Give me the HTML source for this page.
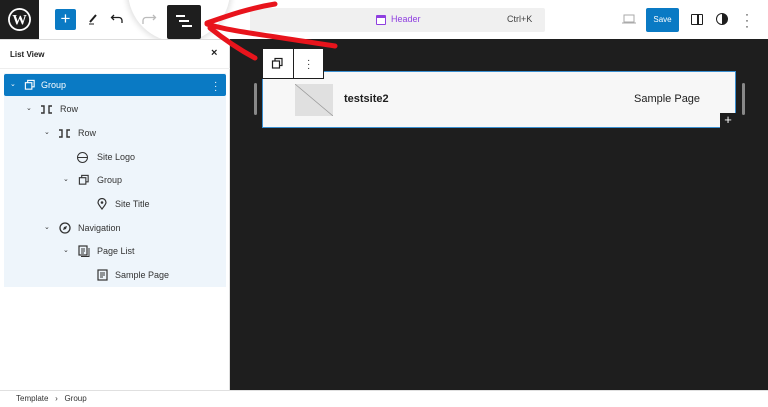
<!DOCTYPE html>
<html><head><style>
*{box-sizing:border-box;margin:0;padding:0}
body{width:768px;height:407px;overflow:hidden;background:#fff;font-family:"Liberation Sans",sans-serif;position:relative;font-size:9px;color:#1e1e1e}
.abs{position:absolute}
.row{position:absolute;left:4px;width:222px;height:22px;line-height:22px;font-size:9px;color:#333}
.row span,.row svg{position:absolute}
</style></head><body>
<!-- top bar -->
<div class="abs" style="left:0;top:0;width:39px;height:39px;background:#1e1e1e"></div>
<svg class="abs" style="left:7px;top:7px" width="25" height="25" viewBox="0 0 24 24"><circle cx="12" cy="12" r="11" fill="#fff"/><circle cx="12" cy="12" r="9.3" fill="#1e1e1e"/><text x="12" y="17" text-anchor="middle" fill="#fff" font-family="Liberation Serif" font-weight="bold" font-size="14">W</text></svg>
<div class="abs" style="left:55px;top:9px;width:21px;height:21px;background:#0a7ac4;border-radius:2px;color:#fff;font-size:17px;line-height:20px;text-align:center">+</div>
<svg class="abs" style="left:86px;top:12px" width="14" height="14" viewBox="0 0 14 14"><path d="M4 10 L10 3" stroke="#1e1e1e" stroke-width="2"/><path d="M3 12 H8" stroke="#1e1e1e" stroke-width="1"/></svg>
<!-- spotlight circle -->
<div class="abs" style="left:128px;top:-60px;width:102px;height:102px;border-radius:50%;background:#fff;box-shadow:0 0 6px 2px rgba(0,0,0,.12)"></div>
<svg class="abs" style="left:110px;top:12px" width="14" height="14" viewBox="0 0 14 14"><path d="M4 3 L1.5 5.5 L4 8 M1.5 5.5 H9 A3 3 0 0 1 12 8.5 V11" stroke="#1e1e1e" stroke-width="1.3" fill="none"/></svg>
<svg class="abs" style="left:141px;top:12px" width="16" height="14" viewBox="0 0 16 14"><path d="M12 3 L14.5 5.5 L12 8 M14.5 5.5 H5 A3 3 0 0 0 2 8.5 V12" stroke="#bbb" stroke-width="1.3" fill="none"/></svg>
<div class="abs" style="left:167px;top:5px;width:34px;height:34px;background:#1e1e1e;border-radius:2px"></div>
<div class="abs" style="left:176px;top:15px;width:9px;height:1.5px;background:#fff"></div>
<div class="abs" style="left:179px;top:20px;width:10px;height:1.5px;background:#fff"></div>
<div class="abs" style="left:182px;top:25px;width:10px;height:1.5px;background:#fff"></div>
<!-- command bar -->
<div class="abs" style="left:250px;top:8px;width:295px;height:24px;background:#f0f0f0;border-radius:2px"></div>
<div class="abs" style="left:376px;top:15px;width:10px;height:10px;background:#8f3fe0;border-radius:1px"></div>
<div class="abs" style="left:377px;top:18px;width:8px;height:6px;background:#fff"></div>
<div class="abs" style="left:391px;top:14px;font-size:9px;color:#8f3fe0">Header</div>
<div class="abs" style="left:507px;top:14px;font-size:9px;color:#444">Ctrl+K</div>
<svg class="abs" style="left:622px;top:14px" width="14" height="10"><rect x="2" y="1" width="10" height="7" fill="none" stroke="#aaa"/><path d="M0 9 H14" stroke="#aaa"/></svg>
<div class="abs" style="left:646px;top:8px;width:33px;height:24px;background:#0a7ac4;border-radius:2px;color:#fff;font-size:8px;line-height:24px;text-align:center">Save</div>
<div class="abs" style="left:691px;top:14px;width:12px;height:11px;border:1.5px solid #1e1e1e;border-radius:1px"></div>
<div class="abs" style="left:697px;top:14px;width:1.5px;height:11px;background:#1e1e1e"></div>
<div class="abs" style="left:716px;top:13px;width:12px;height:12px;border:1.5px solid #1e1e1e;border-radius:50%;background:linear-gradient(90deg,#fff 50%,#1e1e1e 50%)"></div>
<div class="abs" style="left:744px;top:11px;font-size:12px;line-height:6px;width:6px;text-align:center">·<br>·<br>·</div>
<!-- canvas -->
<div class="abs" style="left:230px;top:39px;width:538px;height:351px;background:#1e1e1e"></div>
<div class="abs" style="left:262px;top:71px;width:474px;height:57px;background:#f7f7f7;border:1px solid #3a8fd0"></div>
<div class="abs" style="left:262px;top:48px;width:62px;height:31px;background:#fff;border:1px solid #1e1e1e"></div>
<div class="abs" style="left:293px;top:48px;width:1px;height:31px;background:#1e1e1e"></div>
<svg class="abs" style="left:271px;top:57px" width="13" height="13" viewBox="0 0 13 13"><rect x="4" y="1.5" width="7" height="7" fill="none" stroke="#1e1e1e" stroke-width="1.2"/><rect x="1.5" y="4" width="7" height="7" fill="#fff" stroke="#1e1e1e" stroke-width="1.2"/></svg>
<div class="abs" style="left:307px;top:59px;font-size:10px;line-height:4px;color:#1e1e1e">·<br>·<br>·</div>
<div class="abs" style="left:295px;top:84px;width:38px;height:32px;background:#e0e0e0"></div>
<svg class="abs" style="left:295px;top:84px" width="38" height="32"><path d="M0 0 L38 32" stroke="#999" stroke-width=".7"/></svg>
<div class="abs" style="left:344px;top:93px;font-size:11px;font-weight:bold;color:#1e1e1e">testsite2</div>
<div class="abs" style="left:634px;top:93px;font-size:11px;color:#1e1e1e">Sample Page</div>
<div class="abs" style="left:254px;top:83px;width:3px;height:32px;background:#888;border-radius:2px"></div>
<div class="abs" style="left:742px;top:83px;width:3px;height:32px;background:#888;border-radius:2px"></div>
<div class="abs" style="left:720px;top:113px;width:16px;height:15px;background:#1e1e1e;color:#fff;font-size:13px;line-height:14px;text-align:center">+</div>
<!-- sidebar -->
<div class="abs" style="left:0;top:39px;width:230px;height:351px;background:#fff;border-right:1px solid #ddd"></div>
<div class="abs" style="left:0;top:39px;width:230px;height:1px;background:#ddd"></div>
<div class="abs" style="left:10px;top:50px;font-size:8px;font-weight:bold;color:#1e1e1e">List View</div>
<div class="abs" style="left:211px;top:47px;font-size:11px;font-weight:bold">×</div>
<div class="abs" style="left:0;top:68px;width:230px;height:1px;background:#eee"></div>
<div class="abs" style="left:4px;top:73px;width:222px;height:214px;background:#eef5fb"></div>
<div class="row" style="top:74px;background:#0a7ac4;color:#fff;border-radius:2px"><span style="left:6px;font-size:7px">⌄</span>
<svg style="left:20px;top:5px" width="12" height="12" viewBox="0 0 13 13"><rect x="4" y="1.5" width="7" height="7" fill="none" stroke="#fff" stroke-width="1.2"/><rect x="1.5" y="4" width="7" height="7" fill="#0a7ac4" stroke="#fff" stroke-width="1.2"/></svg>
<span style="left:37px">Group</span><span style="left:210px;font-size:10px;line-height:4px;top:7px">·<br>·<br>·</span></div>
<div class="row" style="top:98px"><span style="left:22px;font-size:7px">⌄</span><svg style="left:36px;top:7px" width="13" height="9" viewBox="0 0 13 9"><path d="M1 1 H4 V8 H1 M12 1 H9 V8 H12" stroke="#333" stroke-width="1.4" fill="none"/></svg><span style="left:56px">Row</span></div>
<div class="row" style="top:122px"><span style="left:40px;font-size:7px">⌄</span><svg style="left:54px;top:7px" width="13" height="9" viewBox="0 0 13 9"><path d="M1 1 H4 V8 H1 M12 1 H9 V8 H12" stroke="#333" stroke-width="1.4" fill="none"/></svg><span style="left:74px">Row</span></div>
<div class="row" style="top:146px"><span style="left:73px;top:6px;width:11px;height:11px;border:1.3px solid #333;border-radius:50%"></span><span style="left:74px;top:11px;width:9px;height:1.2px;background:#333"></span><span style="left:93px">Site Logo</span></div>
<div class="row" style="top:169px"><span style="left:59px;font-size:7px">⌄</span>
<svg style="left:74px;top:5px" width="12" height="12" viewBox="0 0 13 13"><rect x="4" y="1.5" width="7" height="7" fill="none" stroke="#333" stroke-width="1.2"/><rect x="1.5" y="4" width="7" height="7" fill="#eef5fb" stroke="#333" stroke-width="1.2"/></svg><span style="left:93px">Group</span></div>
<div class="row" style="top:193px"><svg style="left:93px;top:5px" width="10" height="12" viewBox="0 0 10 12"><path d="M5 11 C2 7 1 6 1 4.5 A4 4 0 0 1 9 4.5 C9 6 8 7 5 11Z" fill="none" stroke="#333" stroke-width="1.2"/><circle cx="5" cy="4.5" r="1.3" fill="#333"/></svg><span style="left:111px">Site Title</span></div>
<div class="row" style="top:217px"><span style="left:40px;font-size:7px">⌄</span><svg style="left:55px;top:5px" width="12" height="12" viewBox="0 0 12 12"><circle cx="6" cy="6" r="5" fill="none" stroke="#333" stroke-width="1.3"/><path d="M4 8 L5 5 L8 4 L7 7Z" fill="#333"/></svg><span style="left:74px">Navigation</span></div>
<div class="row" style="top:240px"><span style="left:59px;font-size:7px">⌄</span><svg style="left:74px;top:5px" width="12" height="12" viewBox="0 0 12 12"><rect x="1" y="1" width="8" height="9" fill="none" stroke="#333" stroke-width="1.2"/><path d="M3 4 H7 M3 6 H7 M3 8 H6 M11 3 V11.5 H3" stroke="#333" stroke-width="1" fill="none"/></svg><span style="left:93px">Page List</span></div>
<div class="row" style="top:264px"><svg style="left:93px;top:5px" width="11" height="12" viewBox="0 0 11 12"><rect x="1" y="1" width="9" height="10" fill="none" stroke="#333" stroke-width="1.2"/><path d="M3 4 H8 M3 6 H8 M3 8 H6" stroke="#333" stroke-width="1"/></svg><span style="left:111px">Sample Page</span></div>
<!-- footer -->
<div class="abs" style="left:0;top:390px;width:768px;height:1px;background:#e0e0e0"></div>
<div class="abs" style="left:16px;top:394px;font-size:8px;color:#333">Template &nbsp;&nbsp;›&nbsp;&nbsp; Group</div>
<!-- red arrow -->
<svg class="abs" style="left:0;top:0" width="768" height="407"><path d="M207 23 C230 15 250 8 275 4" stroke="#e8141c" stroke-width="5" fill="none" stroke-linecap="round"/><path d="M207 24 C225 30 250 33 335 46" stroke="#e8141c" stroke-width="5" fill="none" stroke-linecap="round"/><path d="M210 28 C225 40 240 50 255 58" stroke="#e8141c" stroke-width="5" fill="none" stroke-linecap="round"/></svg>
</body></html>
